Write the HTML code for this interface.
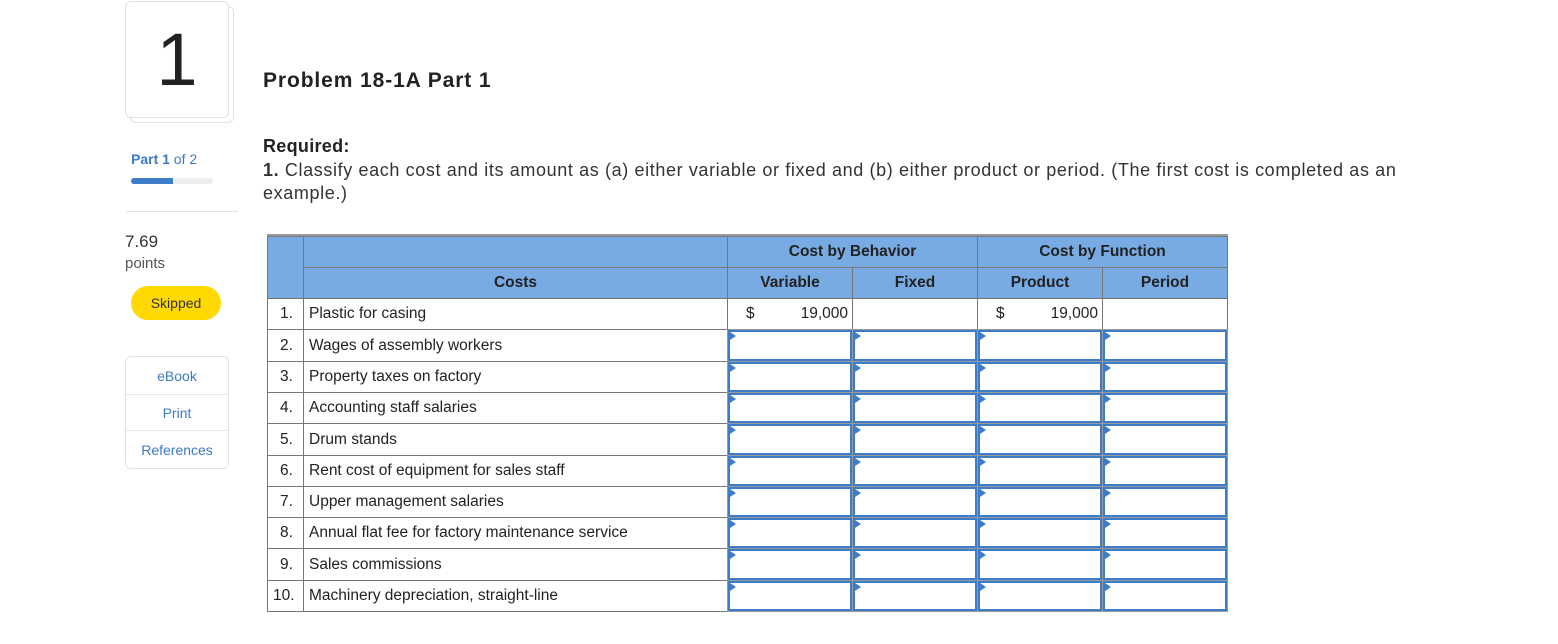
<!DOCTYPE html>
<html><head><meta charset="utf-8"><style>
body{margin:0;width:1558px;height:644px;background:#fff;position:relative;overflow:hidden;font-family:"Liberation Sans",Arial,sans-serif;color:#222}
.a{position:absolute}
.card{border:1px solid #e2e2e2;border-radius:6px;background:#fff}
.h{background:#78aae3;border:1px solid #777;box-sizing:border-box;font-weight:bold;font-size:15.5px;color:#222;text-align:center;display:flex;align-items:center;justify-content:center}
.c{border:1px solid #777;box-sizing:border-box;font-size:15.5px;display:flex;align-items:center;background:#fff}
.in{position:absolute;box-sizing:border-box;border:2px solid #3d7cc9;outline:1px solid #999;background:#fff}
.in:before{content:"";position:absolute;left:0;top:0;border-left:6px solid #3d7cc9;border-top:4px solid transparent;border-bottom:4px solid transparent}
.lnk{color:#3b7ac8;font-size:14px;text-align:center;border-bottom:1px solid #e6e6e6;box-sizing:border-box;display:flex;align-items:center;justify-content:center}
</style></head><body>
<div class="a card" style="left:130px;top:6px;width:102px;height:115px"></div>
<div class="a card" style="left:125px;top:1px;width:102px;height:115px;font-size:74px;text-align:center;line-height:115px;color:#222">1</div>
<div class="a" style="left:131px;top:151px;font-size:14px;color:#3b7ac8"><b>Part 1</b> of 2</div>
<div class="a" style="left:131px;top:178px;width:82px;height:6px;background:#eee;border-radius:3px"></div>
<div class="a" style="left:131px;top:178px;width:42px;height:6px;background:#3d7cc9;border-radius:3px 0 0 3px"></div>
<div class="a" style="left:126px;top:211px;width:112px;height:1px;background:#e2e2e2"></div>
<div class="a" style="left:125px;top:232px;font-size:17px;color:#333">7.69</div>
<div class="a" style="left:125px;top:255px;font-size:15px;color:#555">points</div>
<div class="a" style="left:131px;top:286px;width:90px;height:34px;background:#ffd900;border-radius:17px;font-size:14px;text-align:center;line-height:34px;color:#333">Skipped</div>
<div class="a card" style="left:125px;top:356px;width:102px;height:111px;overflow:hidden">
<div class="lnk" style="height:38px">eBook</div><div class="lnk" style="height:36px">Print</div><div class="lnk" style="height:37px;border:0">References</div></div>
<div class="a" style="left:263px;top:69px;font-size:21px;font-weight:bold;color:#222;letter-spacing:0.9px">Problem 18-1A Part 1</div>
<div class="a" style="left:263px;top:136px;font-size:18px;font-weight:bold;letter-spacing:0.3px">Required:</div>
<div class="a" style="left:263px;top:159px;font-size:18px;width:1150px;line-height:23px;color:#333;letter-spacing:0.62px"><b>1.</b> Classify each cost and its amount as (a) either variable or fixed and (b) either product or period. (The first cost is completed as an example.)</div>

<div class="a" style="left:267px;top:234px;width:961px;height:2px;background:#999"></div>
<div class="a h" style="left:267px;top:236px;width:37px;height:63px"></div>
<div class="a h" style="left:303px;top:236px;width:425px;height:32px"></div>
<div class="a h" style="left:303px;top:267px;width:425px;height:32px">Costs</div>
<div class="a h" style="left:727px;top:236px;width:251px;height:32px">Cost by Behavior</div>
<div class="a h" style="left:977px;top:236px;width:251px;height:32px">Cost by Function</div>
<div class="a h" style="left:727px;top:267px;width:126px;height:32px">Variable</div>
<div class="a h" style="left:852px;top:267px;width:126px;height:32px">Fixed</div>
<div class="a h" style="left:977px;top:267px;width:126px;height:32px">Product</div>
<div class="a h" style="left:1102px;top:267px;width:126px;height:32px">Period</div>

<div id="rows"></div>
<script>
var items=["Plastic for casing","Wages of assembly workers","Property taxes on factory","Accounting staff salaries","Drum stands","Rent cost of equipment for sales staff","Upper management salaries","Annual flat fee for factory maintenance service","Sales commissions","Machinery depreciation, straight-line"];
var h="";
for(var i=0;i<10;i++){var y=Math.round(298+i*31.3),ht=Math.round(298+(i+1)*31.3)-y+1;
h+='<div class="a c" style="left:267px;top:'+y+'px;width:37px;height:'+ht+'px;padding-left:'+(i==9?5:12)+'px">'+(i+1)+'.</div>';
h+='<div class="a c" style="left:303px;top:'+y+'px;width:425px;height:'+ht+'px;padding-left:5px">'+items[i]+'</div>';
var xs=[727,852,977,1102];
for(var j=0;j<4;j++){
 if(i==0){h+='<div class="a c" style="left:'+xs[j]+'px;top:'+y+'px;width:126px;height:'+ht+'px;justify-content:space-between;padding:0 4px 0 18px">'+((j==0||j==2)?'<span>$</span><span>19,000</span>':'')+'</div>';}
 else{h+='<div class="a c" style="left:'+xs[j]+'px;top:'+y+'px;width:126px;height:'+ht+'px"></div><div class="in" style="left:'+(xs[j]+1)+'px;top:'+(y+1)+'px;width:124px;height:'+(ht-2)+'px"></div>';}
}}
document.getElementById("rows").innerHTML=h;
</script>
</body></html>
